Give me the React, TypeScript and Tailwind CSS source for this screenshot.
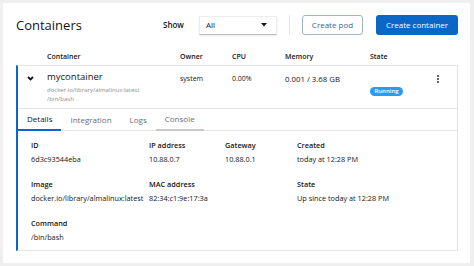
import React from 'react';

const font = { fontFamily: '"Open Sans", "Liberation Sans", sans-serif' };

const tabs = ['Details', 'Integration', 'Logs', 'Console'];

const details: { label: string; value: string }[][] = [
    [
        { label: 'ID', value: '6d3c93544eba' },
        { label: 'IP address', value: '10.88.0.7' },
        { label: 'Gateway', value: '10.88.0.1' },
        { label: 'Created', value: 'today at 12:28 PM' },
    ],
    [
        { label: 'Image', value: 'docker.io/library/almalinux:latest' },
        { label: 'MAC address', value: '82:34:c1:9e:17:3a' },
        { label: '', value: '' },
        { label: 'State', value: 'Up since today at 12:28 PM' },
    ],
    [{ label: 'Command', value: '/bin/bash' }],
];

const Chevron = () => (
    <svg width="7" height="5" viewBox="0 0 7 5" className="text-[#151515]">
        <path d="M1 1 L3.5 3.5 L6 1" fill="none" stroke="currentColor" strokeWidth="1.8" />
    </svg>
);

const Kebab = () => (
    <div className="flex flex-col gap-[1px] items-center w-[3px]">
        <span className="w-[2px] h-[2px] rounded-full bg-[#333]" />
        <span className="w-[2px] h-[2px] rounded-full bg-[#333]" />
        <span className="w-[2px] h-[2px] rounded-full bg-[#333]" />
    </div>
);

export default function App() {
    return (
        <div className="w-[474px] h-[266px] bg-[#efefef] pt-[3px] pl-[3px] text-[#151515]" style={font}>
            <div className="w-[467px] h-[260px] bg-white pl-[13px] pr-[12px] pt-[12px]">
                {/* toolbar */}
                <div className="flex items-center h-[20px]">
                    <h1 className="w-[147px] text-[13px] leading-none">Containers</h1>
                    <span className="w-[36px] text-[8px] font-semibold">Show</span>
                    <div className="w-[78px] h-[19px] flex items-center justify-between pl-[6px] pr-[9px] border border-[#ececec] border-b-[#b8bbbe] shadow-[0_1px_2px_rgba(0,0,0,0.08)]">
                        <span className="text-[8px]">All</span>
                        <svg width="6" height="4" viewBox="0 0 6 4">
                            <path d="M0 0 H6 L3 3.5 Z" fill="#151515" />
                        </svg>
                    </div>
                    <div className="ml-[12px] w-px h-[20px] bg-[#e8e8e8]" />
                    <button className="ml-[12px] w-[61px] h-[20px] rounded-[3px] border border-[#9fb3c8] text-[8px] text-[#41658a]">
                        Create pod
                    </button>
                    <button className="ml-[13px] w-[82px] h-[20px] rounded-[3px] bg-[#0b66c6] text-[8px] text-white">
                        Create container
                    </button>
                </div>

                {/* column header */}
                <div className="mt-[14px] h-[16px] flex items-center pl-[31px] text-[7px] font-semibold">
                    <span className="w-[133px]">Container</span>
                    <span className="w-[52px]">Owner</span>
                    <span className="w-[53px]">CPU</span>
                    <span className="w-[85px]">Memory</span>
                    <span>State</span>
                </div>

                {/* expanded row */}
                <div className="h-[186px] border border-[#e4e4e4] border-l-[2px] border-l-[#0b66c6]">
                    <div className="h-[43px] flex border-b border-[#e4e4e4]">
                        <div className="w-[29px] pl-[9px] pt-[10px]">
                            <Chevron />
                        </div>
                        <div className="w-[133px] pt-[5px]">
                            <div className="text-[9.5px] leading-[12px]">mycontainer</div>
                            <div className="mt-[3px] text-[6px] leading-[9px] text-[#8a8d90]">
                                <div>docker.io/library/almalinux:latest</div>
                                <div>/bin/bash</div>
                            </div>
                        </div>
                        <div className="w-[52px] pt-[7px] text-[7px] leading-[12px]">system</div>
                        <div className="w-[53px] pt-[7px] text-[7px] leading-[12px]">0.00%</div>
                        <div className="w-[85px] pt-[7px] text-[7.8px] leading-[12px]">0.001 / 3.68 GB</div>
                        <div className="w-[66px] pt-[9px]">
                            <span className="inline-flex items-center justify-center w-[33px] h-[9px] rounded-full bg-[#2b9af3] text-white text-[6px] font-semibold">
                                Running
                            </span>
                        </div>
                        <div className="pt-[9px]">
                            <Kebab />
                        </div>
                    </div>

                    {/* tabs */}
                    <div className="h-[22px] flex border-b border-[#e4e4e4]">
                        {tabs.map((t) => (
                            <div
                                key={t}
                                className={
                                    t === 'Details'
                                        ? 'px-[9px] flex items-center text-[8px] border-b-2 border-[#0b66c6] -mb-px'
                                        : t === 'Console'
                                          ? 'px-[9px] flex items-center text-[8px] text-[#6a6e73] border-b-2 border-[#c9c9c9] -mb-px'
                                          : 'px-[9px] flex items-center text-[8px] text-[#6a6e73]'
                                }
                            >
                                {t}
                            </div>
                        ))}
                    </div>

                    {/* details */}
                    <div className="pl-[13px] pt-[9px] flex flex-col gap-y-[15px]">
                        {details.map((row, i) => (
                            <div key={i} className="grid grid-cols-[118px_76px_72px_1fr]">
                                {row.map((d, j) => (
                                    <div key={j}>
                                        {d.label && (
                                            <>
                                                <div className="text-[7.3px] leading-[10px] font-semibold">{d.label}</div>
                                                <div className="mt-[4px] text-[7.3px] leading-[10px]">{d.value}</div>
                                            </>
                                        )}
                                    </div>
                                ))}
                            </div>
                        ))}
                    </div>
                </div>
            </div>
        </div>
    );
}
